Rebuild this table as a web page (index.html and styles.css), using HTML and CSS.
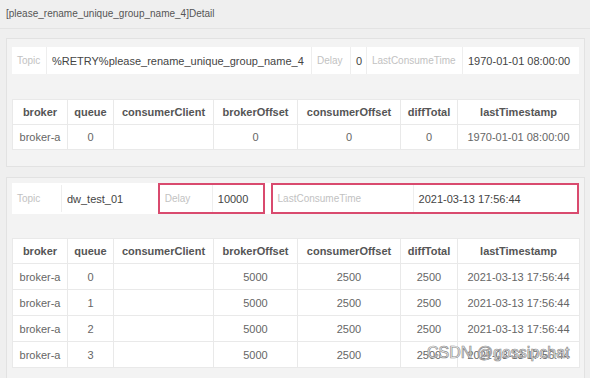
FILE: index.html
```html
<!DOCTYPE html>
<html>
<head>
<meta charset="utf-8">
<link rel="stylesheet" href="styles.css">
</head>
<body>
<div class="title">[please_rename_unique_group_name_4]Detail</div>

<div class="panel">
  <div class="kv">
    <div class="cell label w35">Topic</div>
    <div class="cell val w265">%RETRY%please_rename_unique_group_name_4</div>
    <div class="cell label w39">Delay</div>
    <div class="cell val w16">0</div>
    <div class="cell label w96">LastConsumeTime</div>
    <div class="cell val grow">1970-01-01 08:00:00</div>
  </div>
  <table class="grid">
    <colgroup>
      <col class="c1"><col class="c2"><col class="c3"><col class="c4"><col class="c5"><col class="c6"><col class="c7">
    </colgroup>
    <thead>
      <tr><th>broker</th><th>queue</th><th>consumerClient</th><th>brokerOffset</th><th>consumerOffset</th><th>diffTotal</th><th>lastTimestamp</th></tr>
    </thead>
    <tbody>
      <tr><td>broker-a</td><td>0</td><td></td><td>0</td><td>0</td><td>0</td><td>1970-01-01 08:00:00</td></tr>
    </tbody>
  </table>
</div>

<div class="panel panel2">
  <div class="kv kv2">
    <div class="cell label w50">Topic</div>
    <div class="cell val w96">dw_test_01</div>
    <div class="mark mdelay">
      <div class="cell label w53">Delay</div>
      <div class="cell val grow">10000</div>
    </div>
    <div class="spacer"></div>
    <div class="mark mlct">
      <div class="cell label w141">LastConsumeTime</div>
      <div class="cell val grow">2021-03-13 17:56:44</div>
    </div>
  </div>
  <table class="grid">
    <colgroup>
      <col class="c1"><col class="c2"><col class="c3"><col class="c4"><col class="c5"><col class="c6"><col class="c7">
    </colgroup>
    <thead>
      <tr><th>broker</th><th>queue</th><th>consumerClient</th><th>brokerOffset</th><th>consumerOffset</th><th>diffTotal</th><th>lastTimestamp</th></tr>
    </thead>
    <tbody>
      <tr><td>broker-a</td><td>0</td><td></td><td>5000</td><td>2500</td><td>2500</td><td>2021-03-13 17:56:44</td></tr>
      <tr><td>broker-a</td><td>1</td><td></td><td>5000</td><td>2500</td><td>2500</td><td>2021-03-13 17:56:44</td></tr>
      <tr><td>broker-a</td><td>2</td><td></td><td>5000</td><td>2500</td><td>2500</td><td>2021-03-13 17:56:44</td></tr>
      <tr><td>broker-a</td><td>3</td><td></td><td>5000</td><td>2500</td><td>2500</td><td>2021-03-13 17:56:44</td></tr>
    </tbody>
  </table>
</div>

<div class="watermark">CSDN @gossipchat</div>
</body>
</html>
```

FILE: styles.css
```css
html, body {
  margin: 0;
  padding: 0;
}
body {
  background: #efefef;
  font-family: "Liberation Sans", Arial, sans-serif;
  color: #555;
  width: 590px;
  height: 378px;
  overflow: hidden;
  position: relative;
}
.title {
  height: 28px;
  line-height: 28px;
  padding-left: 6px;
  font-size: 10px;
  color: #555;
  border-bottom: 1px solid #e3e3e3;
}
.panel {
  margin: 9px 0 0 6px;
  width: 567px;
  background: #f3f3f3;
  border: 1px solid #e2e2e2;
  padding: 8px 5px 16px 5px;
}
.panel2 {
  margin-top: 10px;
  padding-top: 5px;
}
.kv {
  display: flex;
  background: #fff;
  height: 27px;
}
.kv2 {
  height: 31px;
}
.cell {
  display: flex;
  align-items: center;
  padding: 0 5px;
  box-sizing: border-box;
  border-right: 1px solid #eee;
  white-space: nowrap;
  overflow: hidden;
}
.cell:last-child {
  border-right: none;
}
.label {
  font-size: 10px;
  color: #c2c2c2;
}
.val {
  font-size: 11px;
  color: #444;
}
.grow { flex: 1; }
.w35 { width: 35px; }
.w265 { width: 265px; }
.w39 { width: 39px; }
.w16 { width: 16px; }
.w96 { width: 96px; }
.w50 { width: 50px; }
.w53 { width: 53px; }
.w141 { width: 141px; }

.kv2 .cell {
  margin: 2px 0;
}
.kv2 .w96 {
  border-right: none;
}
.mark {
  display: flex;
  border: 2px solid #d94a6e;
  box-sizing: border-box;
}
.mark .cell {
  margin: 0;
}
.mdelay { width: 107px; }
.spacer { width: 6px; }
.mlct { width: 309px; }

.grid {
  width: 567px;
  margin-top: 25px;
  border-collapse: collapse;
  table-layout: fixed;
  background: #fff;
}
.panel2 .grid {
  margin-top: 24px;
}
.c1 { width: 55px; }
.c2 { width: 46px; }
.c3 { width: 100px; }
.c4 { width: 84px; }
.c5 { width: 103px; }
.c6 { width: 57px; }
.c7 { width: 122px; }
.grid th, .grid td {
  border: 1px solid #e9e9e9;
  height: 24px;
  padding: 0;
  text-align: center;
  font-size: 11px;
  white-space: nowrap;
  overflow: hidden;
}
.grid th {
  font-weight: bold;
  color: #555;
}
.grid td {
  color: #666;
}
.panel2 .grid td {
  height: 25px;
}
.watermark {
  position: absolute;
  left: 427px;
  top: 344px;
  font-size: 16px;
  color: rgba(255, 255, 255, 0.92);
  -webkit-text-stroke: 0.7px #8a8a8a;
}
```
